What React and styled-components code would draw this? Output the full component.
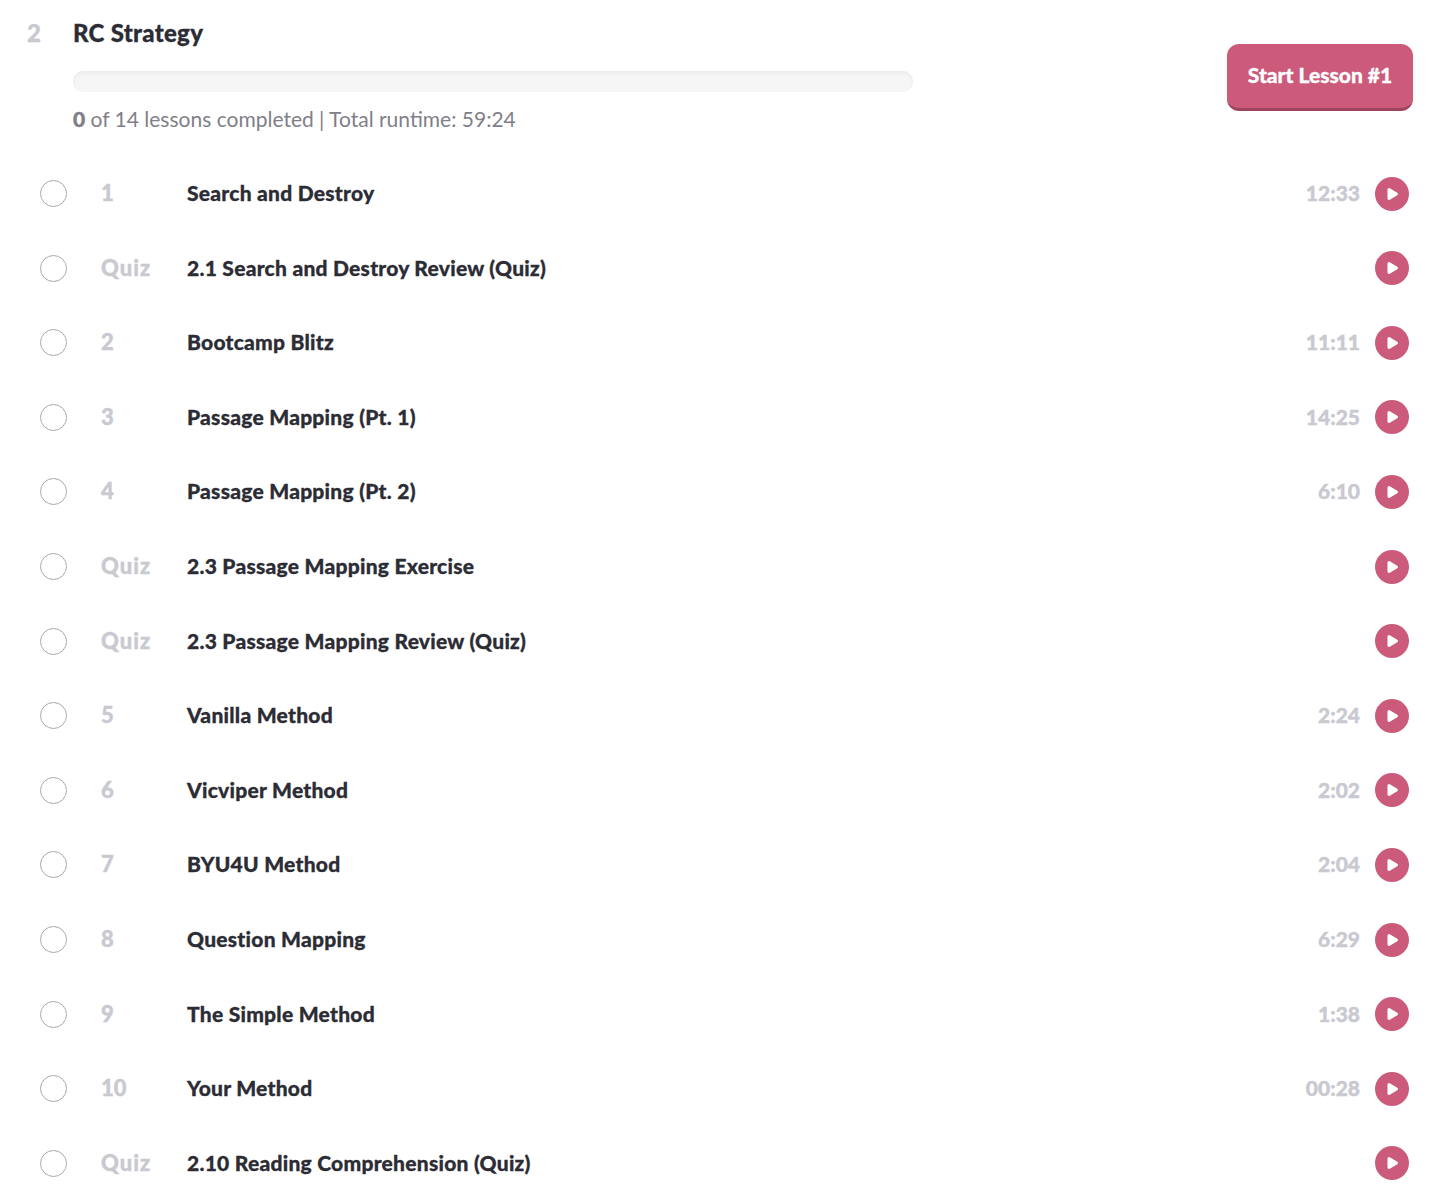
import React from 'react';
import styled, { createGlobalStyle } from 'styled-components';

const GlobalStyle = createGlobalStyle`
    html, body {
        margin: 0;
        padding: 0;
        background: #fff;
        height: 1198px;
        overflow: hidden;
    }
    body {
        font-family: "Lato", "Open Sans", sans-serif;
        color: #2c2c34;
    }
`

const Page = styled.div`
    padding: 0 29px 0 27px;
`

const Header = styled.div`
    display: flex;
    justify-content: space-between;
    height: 156.3px;
`

const SectionNum = styled.div`
    width: 46px;
    padding-top: 19px;
    font-size: 24px;
    line-height: 28px;
    font-weight: 900;
    color: #c9c9d0;
    -webkit-text-stroke: 0.4px #c9c9d0;
`

const HeaderMain = styled.div`
    flex: 1;
    padding-top: 19px;
`

const SectionTitle = styled.div`
    font-size: 24px;
    line-height: 28px;
    font-weight: 900;
    letter-spacing: 0.3px;
    -webkit-text-stroke: 0.3px #2c2c34;
`

const Progress = styled.div`
    width: 840px;
    height: 21px;
    margin-top: 24px;
    border-radius: 10px;
    background: #f6f6f7;
    box-shadow: inset 0 2px 4px rgba(0, 0, 0, 0.05);
`

const Summary = styled.div`
    margin-top: 14px;
    font-size: 21px;
    line-height: 26px;
    color: #7f7f89;
    b {
        font-weight: 900;
        -webkit-text-stroke: 0.4px #7f7f89;
    }
`

const StartButton = styled.button`
    align-self: flex-start;
    width: 186px;
    height: 67px;
    margin-top: 44px;
    padding: 0 0 4px;
    border: 0;
    border-bottom: 3px solid #9e445f;
    border-radius: 12px;
    background: #cb5a7b;
    color: #fff;
    font-family: inherit;
    font-size: 21px;
    font-weight: 900;
    -webkit-text-stroke: 0.3px #fff;
`

const Row = styled.div`
    display: flex;
    align-items: center;
    height: 74.6px;
    padding-left: 13px;
    padding-right: 4px;
`

const Check = styled.div`
    width: 25px;
    height: 25px;
    border: 1px solid #a9a9ab;
    border-radius: 50%;
    background: #fff;
    flex: none;
`

const Num = styled.div`
    width: 86px;
    margin-left: 34px;
    padding-bottom: 2px;
    font-size: 22px;
    font-weight: 900;
    letter-spacing: ${p => (p.$quiz ? '1px' : '0')};
    color: #c9c9d0;
    -webkit-text-stroke: 0.4px #c9c9d0;
    flex: none;
`

const Title = styled.div`
    flex: 1;
    padding-bottom: 2px;
    font-size: 21px;
    font-weight: 900;
    letter-spacing: 0.25px;
    color: #2c2c34;
    -webkit-text-stroke: 0.3px #2c2c34;
`

const Time = styled.div`
    padding-bottom: 2px;
    font-size: 21px;
    font-weight: 900;
    color: #c9c9d0;
    -webkit-text-stroke: 0.4px #c9c9d0;
    margin-right: 15px;
`

const PlayCircle = styled.div`
    width: 34px;
    height: 34px;
    border-radius: 50%;
    background: #cb5a7b;
    display: flex;
    align-items: center;
    justify-content: center;
    flex: none;
`

const lessons = [
    ['1', 'Search and Destroy', '12:33'],
    ['Quiz', '2.1 Search and Destroy Review (Quiz)'],
    ['2', 'Bootcamp Blitz', '11:11'],
    ['3', 'Passage Mapping (Pt. 1)', '14:25'],
    ['4', 'Passage Mapping (Pt. 2)', '6:10'],
    ['Quiz', '2.3 Passage Mapping Exercise'],
    ['Quiz', '2.3 Passage Mapping Review (Quiz)'],
    ['5', 'Vanilla Method', '2:24'],
    ['6', 'Vicviper Method', '2:02'],
    ['7', 'BYU4U Method', '2:04'],
    ['8', 'Question Mapping', '6:29'],
    ['9', 'The Simple Method', '1:38'],
    ['10', 'Your Method', '00:28'],
    ['Quiz', '2.10 Reading Comprehension (Quiz)'],
];

const PlayIcon = () => (
    <svg width="13" height="14" viewBox="0 0 13 14">
        <path d="M3 2.5 L10.5 7 L3 11.5 Z" fill="#fff" stroke="#fff" strokeWidth="3" strokeLinejoin="round" />
    </svg>
);

const App = () => {
    return <Page>
        <GlobalStyle />
        <Header>
            <SectionNum>2</SectionNum>
            <HeaderMain>
                <SectionTitle>RC Strategy</SectionTitle>
                <Progress />
                <Summary><b>0</b> of 14 lessons completed | Total runtime: 59:24</Summary>
            </HeaderMain>
            <StartButton>Start Lesson #1</StartButton>
        </Header>
        {lessons.map(([num, title, time], i) => (
            <Row key={i}>
                <Check />
                <Num $quiz={num === 'Quiz'}>{num}</Num>
                <Title>{title}</Title>
                {time ? <Time>{time}</Time> : null}
                <PlayCircle><PlayIcon /></PlayCircle>
            </Row>
        ))}
    </Page>
}

export default App;
